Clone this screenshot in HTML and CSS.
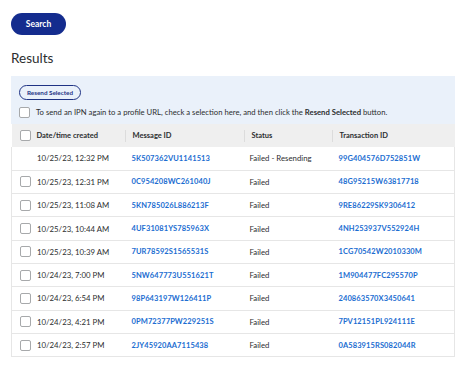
FILE: index.html
```html
<!DOCTYPE html>
<html lang="en">
<head>
    <meta charset="UTF-8">
    <meta name="viewport" content="width=device-width, initial-scale=1.0">
    <title>IPN History</title>
    <link rel="stylesheet" href="styles.css">
</head>
<body>
    <div class="page">
        <button type="button" class="search-button">Search</button>

        <h2 class="results-title">Results</h2>

        <div class="resend-panel">
            <button type="button" class="resend-button">Resend Selected</button>
            <div class="resend-note">
                <span class="box"></span>
                <span>To send an IPN again to a profile URL, check a selection here, and then click the <b>Resend Selected</b> button.</span>
            </div>
        </div>

        <table class="results">
            <colgroup>
                <col class="col-date">
                <col class="col-msg">
                <col class="col-status">
                <col class="col-txn">
            </colgroup>
            <thead>
                <tr>
                    <th><span class="cell-inner"><span class="box"></span>Date/time created</span></th>
                    <th><span class="divider">Message ID</span></th>
                    <th><span class="divider">Status</span></th>
                    <th><span class="divider">Transaction ID</span></th>
                </tr>
            </thead>
            <tbody>
                <tr>
                    <td><span class="cell-inner"><span class="box hidden"></span>10/25/23, 12:32 PM</span></td>
                    <td><a href="#">5K507362VU1141513</a></td>
                    <td>Failed - Resending</td>
                    <td><a href="#">99G404576D752851W</a></td>
                </tr>
                <tr>
                    <td><span class="cell-inner"><span class="box"></span>10/25/23, 12:31 PM</span></td>
                    <td><a href="#">0C954208WC261040J</a></td>
                    <td>Failed</td>
                    <td><a href="#">48G95215W63817718</a></td>
                </tr>
                <tr>
                    <td><span class="cell-inner"><span class="box"></span>10/25/23, 11:08 AM</span></td>
                    <td><a href="#">5KN785026L886213F</a></td>
                    <td>Failed</td>
                    <td><a href="#">9RE86229SK9306412</a></td>
                </tr>
                <tr>
                    <td><span class="cell-inner"><span class="box"></span>10/25/23, 10:44 AM</span></td>
                    <td><a href="#">4UF31081YS785963X</a></td>
                    <td>Failed</td>
                    <td><a href="#">4NH253937V552924H</a></td>
                </tr>
                <tr>
                    <td><span class="cell-inner"><span class="box"></span>10/25/23, 10:39 AM</span></td>
                    <td><a href="#">7UR78592S1565531S</a></td>
                    <td>Failed</td>
                    <td><a href="#">1CG70542W2010330M</a></td>
                </tr>
                <tr>
                    <td><span class="cell-inner"><span class="box"></span>10/24/23, 7:00 PM</span></td>
                    <td><a href="#">5NW647773U551621T</a></td>
                    <td>Failed</td>
                    <td><a href="#">1M904477FC295570P</a></td>
                </tr>
                <tr>
                    <td><span class="cell-inner"><span class="box"></span>10/24/23, 6:54 PM</span></td>
                    <td><a href="#">98P643197W126411P</a></td>
                    <td>Failed</td>
                    <td><a href="#">240863570X3450641</a></td>
                </tr>
                <tr>
                    <td><span class="cell-inner"><span class="box"></span>10/24/23, 4:21 PM</span></td>
                    <td><a href="#">0PM72377PW229251S</a></td>
                    <td>Failed</td>
                    <td><a href="#">7PV12151PL924111E</a></td>
                </tr>
                <tr>
                    <td><span class="cell-inner"><span class="box"></span>10/24/23, 2:57 PM</span></td>
                    <td><a href="#">2JY45920AA7115438</a></td>
                    <td>Failed</td>
                    <td><a href="#">0A583915RS082044R</a></td>
                </tr>
            </tbody>
        </table>
    </div>
</body>
</html>
```

FILE: styles.css
```css
body {
    margin: 0;
    padding: 0;
    background-color: #fff;
    color: #2c2e2f;
    font-family: Lato, "Open Sans", sans-serif;
}

.page {
    padding: 13px 19px 0 11px;
}

.search-button {
    display: block;
    width: 55px;
    height: 22px;
    border: none;
    border-radius: 11px;
    background-color: #142c8e;
    color: white;
    font-family: inherit;
    font-size: 8.5px;
    font-weight: bold;
    padding: 0;
}

.results-title {
    margin: 14px 0 9px;
    font-size: 13.5px;
    font-weight: normal;
    line-height: 18px;
}

.resend-panel {
    height: 48px;
    box-sizing: border-box;
    background-color: #eaf1fa;
    padding: 9px 8px 0;
}

.resend-button {
    display: block;
    height: 15px;
    padding: 0 7px;
    border: 1px solid #1f3384;
    border-radius: 8px;
    background: transparent;
    color: #1f3384;
    font-family: inherit;
    font-size: 6.3px;
    font-weight: bold;
}

.resend-note {
    display: flex;
    align-items: center;
    gap: 6px;
    margin-top: 6px;
    font-size: 7.7px;
    line-height: 12px;
}

.box {
    display: inline-block;
    flex: none;
    width: 9px;
    height: 9px;
    border: 1px solid #a7a9ab;
    border-radius: 2px;
    background-color: white;
}

.box.hidden {
    visibility: hidden;
}

.results {
    width: 100%;
    border-collapse: collapse;
    table-layout: fixed;
    font-size: 7.8px;
    line-height: 12px;
}

.col-date { width: 113px; }
.col-msg { width: 119px; }
.col-status { width: 88px; }

.results thead tr {
    height: 23px;
}

.results tbody tr {
    height: 23.3px;
}

.results th {
    background-color: #efefef;
    text-align: left;
    font-weight: bold;
    font-size: 7.5px;
    padding: 0;
}

.results td {
    padding: 0;
    border-bottom: 1px solid #e6e6e6;
    background-color: white;
}

.results td:first-child {
    border-left: 1px solid #e6e6e6;
}

.results td:last-child {
    border-right: 1px solid #e6e6e6;
}

.results td:not(:first-child) {
    padding-left: 7px;
}

.results td:nth-child(3) {
    padding-left: 6px;
}

.cell-inner {
    display: flex;
    align-items: center;
    gap: 6px;
    padding-left: 8px;
}

.divider {
    display: block;
    border-left: 1px solid #dcdcdc;
    padding-left: 7px;
}

.results a {
    color: #1b6dd1;
    font-weight: bold;
    font-size: 7.5px;
    text-decoration: none;
    letter-spacing: 0.1px;
}
```
